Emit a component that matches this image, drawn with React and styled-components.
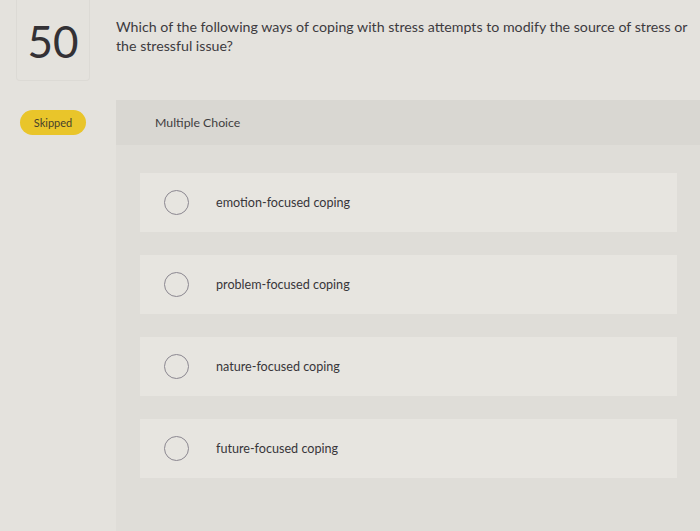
import React from "react";
import styled, { createGlobalStyle } from "styled-components";

const GlobalStyle = createGlobalStyle`
  html, body {
    margin: 0;
    padding: 0;
    background: #e4e2dd;
  }
  body {
    font-family: Lato, "Open Sans", sans-serif;
    color: #3f3d40;
  }
`;

const Page = styled.div`
  width: 700px;
  height: 531px;
  overflow: hidden;
  display: grid;
  grid-template-columns: 116px 1fr;
  grid-template-rows: 100px 1fr;
`;

const NumberBox = styled.div`
  margin-left: 16px;
  width: 74px;
  height: 81px;
  box-sizing: border-box;
  border: 1px solid #dcdad5;
  border-top: none;
  border-radius: 0 0 4px 4px;
  display: flex;
  align-items: center;
  justify-content: center;
  font-size: 44px;
  font-weight: 400;
  color: #333135;
  padding-top: 2px;
`;

const Question = styled.div`
  padding-top: 17px;
  padding-right: 8px;
  font-size: 14.2px;
  line-height: 19px;
  color: #3d3b3f;
`;

const Side = styled.div`
  padding: 10px 0 0 20px;
`;

const Badge = styled.span`
  display: inline-flex;
  align-items: center;
  justify-content: center;
  width: 66px;
  height: 25px;
  border-radius: 13px;
  background: #e9c52a;
  font-size: 11px;
  color: #463f2c;
`;

const Panel = styled.div`
  background: #dfddd8;
  display: flex;
  flex-direction: column;
`;

const PanelHeader = styled.div`
  height: 45px;
  background: #d9d7d2;
  display: flex;
  align-items: center;
  padding-left: 39px;
  font-size: 12.3px;
  color: #3f3d40;
`;

const Options = styled.div`
  display: flex;
  flex-direction: column;
  gap: 23px;
  padding: 28px 23px 0 24px;
`;

const Option = styled.div`
  height: 59px;
  background: #e7e5e0;
  display: flex;
  align-items: center;
  padding-left: 24px;
  gap: 27px;
  font-size: 12.6px;
  color: #38363a;
`;

const Radio = styled.span`
  width: 23px;
  height: 23px;
  border-radius: 50%;
  border: 1.5px solid #8b8790;
  flex: none;
`;

const choices = [
  "emotion-focused coping",
  "problem-focused coping",
  "nature-focused coping",
  "future-focused coping",
];

export default function App() {
  return (
    <>
      <GlobalStyle />
      <Page>
        <div>
          <NumberBox>50</NumberBox>
        </div>
        <Question>
          Which of the following ways of coping with stress attempts to modify
          the source of stress or the stressful issue?
        </Question>
        <Side>
          <Badge>Skipped</Badge>
        </Side>
        <Panel>
          <PanelHeader>Multiple Choice</PanelHeader>
          <Options>
            {choices.map((c) => (
              <Option key={c}>
                <Radio />
                {c}
              </Option>
            ))}
          </Options>
        </Panel>
      </Page>
    </>
  );
}
